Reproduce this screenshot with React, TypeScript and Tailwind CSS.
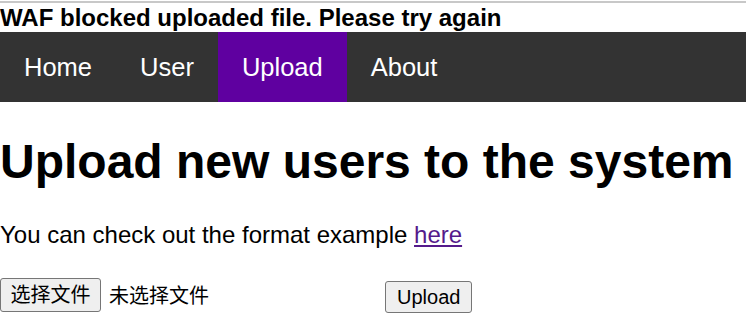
import React from 'react';

const navItems = ['Home', 'User', 'Upload', 'About'];

const App: React.FC = () => {
  return (
    <div className="min-h-[320px] bg-white text-black font-['Liberation_Sans','Noto_Sans_CJK_SC',Arial,sans-serif]">
      <div className="pt-[1px]">
        <div className="h-[2px] bg-[#c8c8c8]" />
      </div>
      <div className="text-[24px] font-bold leading-[29px]">WAF blocked uploaded file. Please try again</div>

      {/* Top navigation */}
      <nav className="flex bg-[#333333]">
        {navItems.map((item) => (
          <a
            key={item}
            href="#"
            className={
              item === 'Upload'
                ? 'block px-[24px] py-[21px] text-[25.5px] leading-[28px] text-white bg-[#5f00a0]'
                : 'block px-[24px] py-[21px] text-[25.5px] leading-[28px] text-white'
            }
          >
            {item}
          </a>
        ))}
      </nav>

      <h1 className="my-[32px] text-[48px] font-bold leading-[55px]">Upload new users to the system</h1>
      <p className="my-[24px] text-[24px] leading-[28px]">
        You can check out the format example{' '}
        <a href="#" className="text-[#551a8b] underline">
          here
        </a>
      </p>

      <form className="flex items-start pt-[5px] text-[20px]">
        <div className="flex w-[379px] items-center">
          <button
            type="button"
            className="flex h-[34px] items-center rounded-[3px] border-[1.5px] border-[#767676] bg-[#efefef] px-[9.5px]"
          >
            选择文件
          </button>
          <span className="ml-[8px] mt-[2px]">未选择文件</span>
        </div>
        <button
          type="button"
          className="ml-[6px] mt-[3px] flex h-[32px] items-center rounded-[3px] border-[1.5px] border-[#767676] bg-[#efefef] px-[11px]"
        >
          Upload
        </button>
      </form>
    </div>
  );
};

export default App;
